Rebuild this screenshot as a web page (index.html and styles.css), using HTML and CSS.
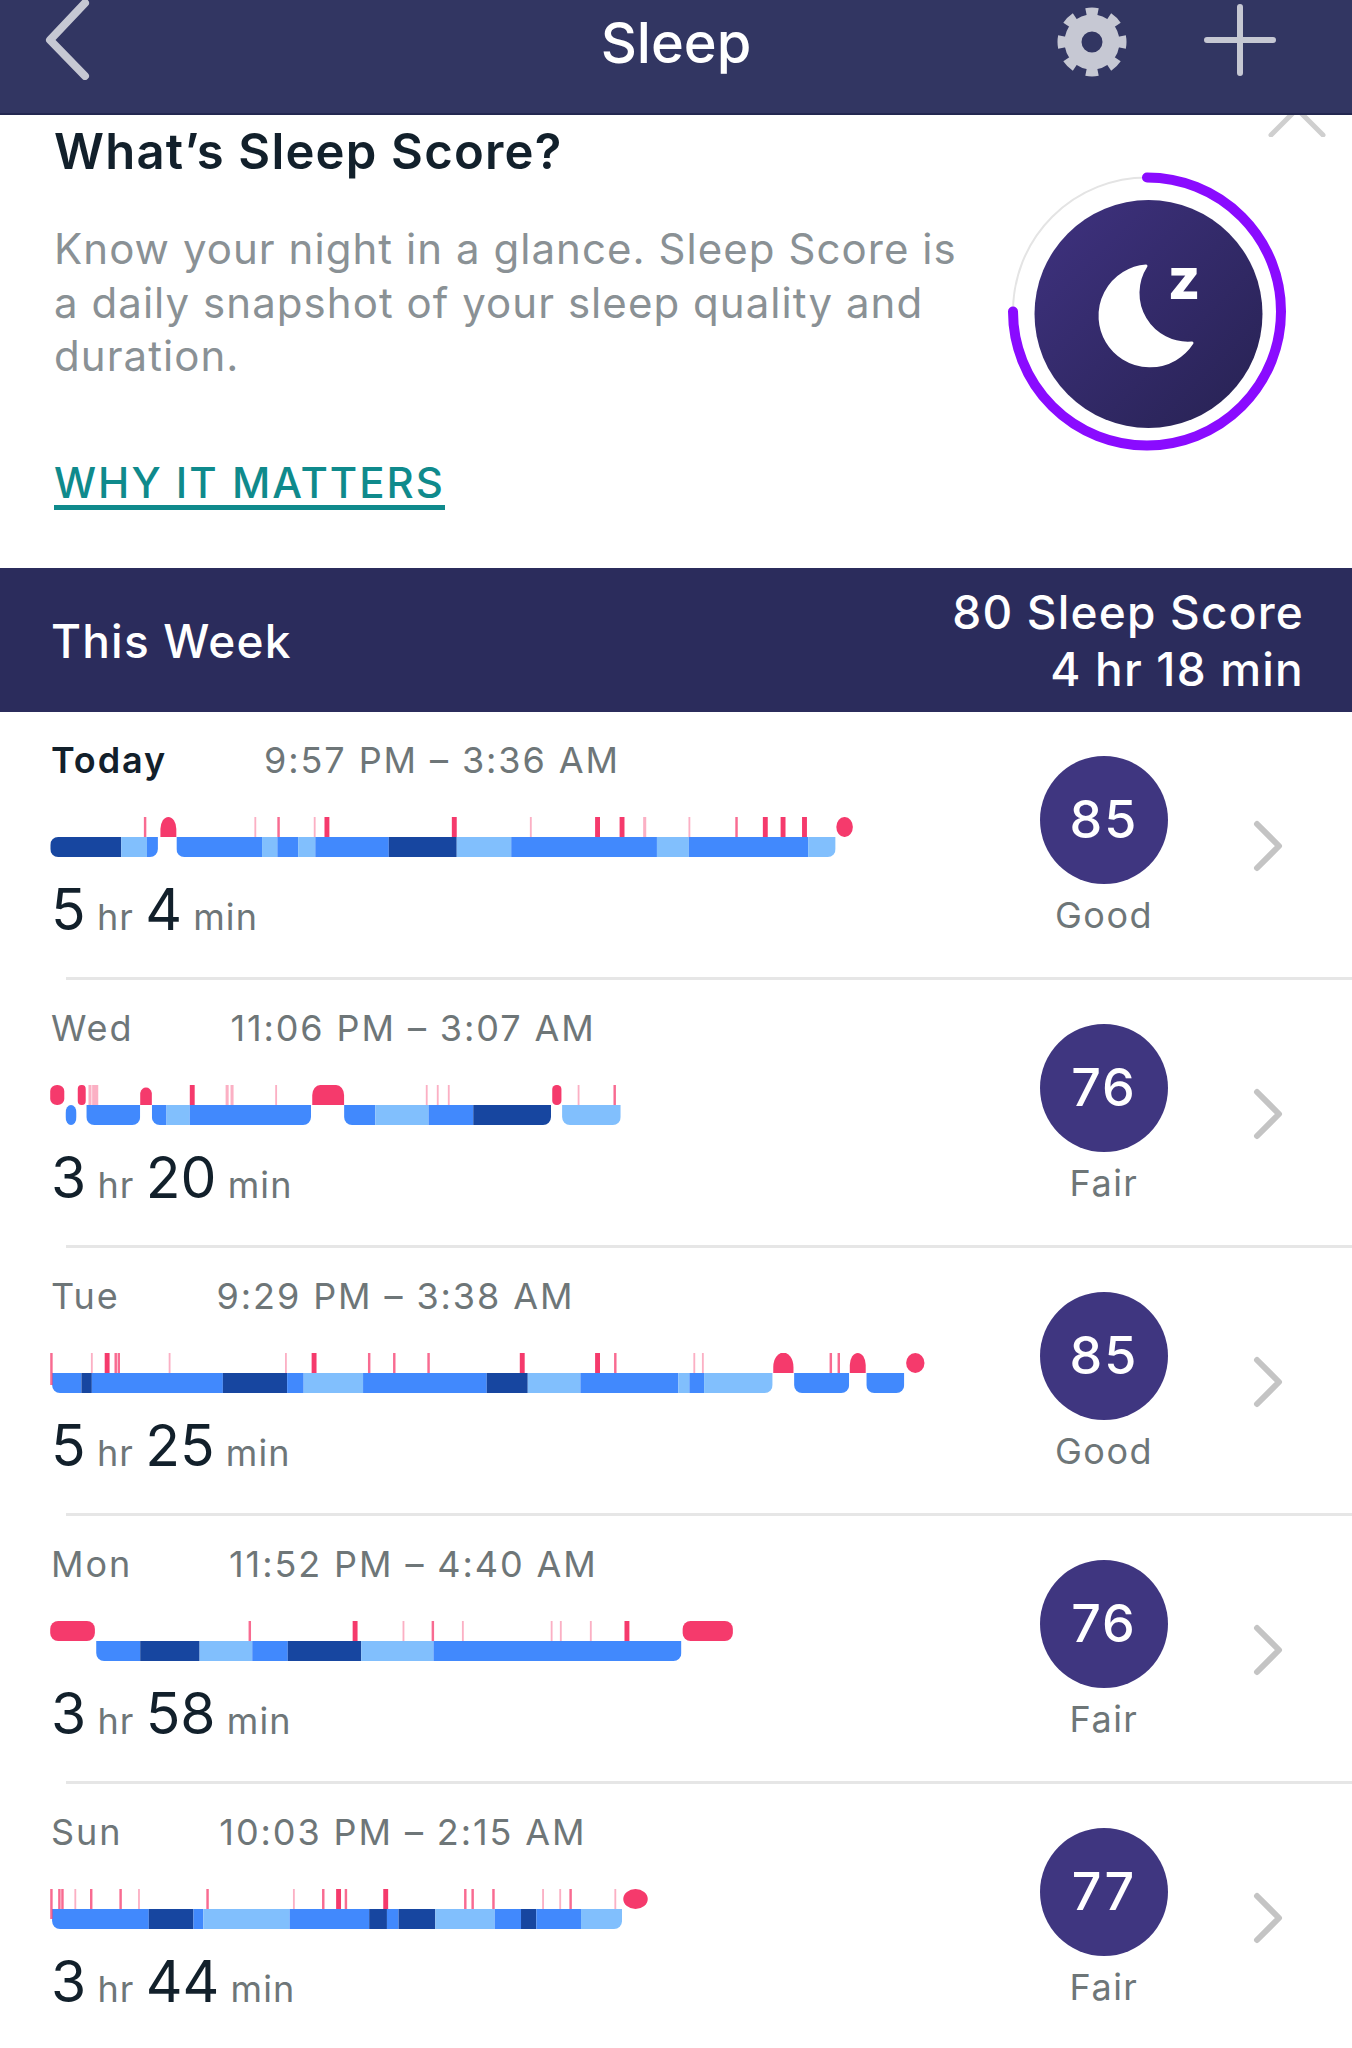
FILE: index.html
```html
<!DOCTYPE html>
<html lang="en">
<head>
    <meta charset="UTF-8">
    <title>Sleep</title>
    <link rel="stylesheet" href="styles.css">
</head>
<body>
    <header class="topbar">
        <svg class="back" width="60" height="80" viewBox="0 0 60 80"><path d="M43 3 L8 40 L43 76"/></svg>
        <h1 class="title">Sleep</h1>
        <div class="actions">
            <svg class="gear" width="80" height="80" viewBox="0 0 80 80">
                <circle class="gear-ring" cx="40" cy="40" r="19"/>
                <circle class="gear-teeth" cx="40" cy="40" r="30" pathLength="8"/>
            </svg>
            <svg class="plus" width="72" height="72" viewBox="0 0 72 72"><path d="M36 3 V69 M3 36 H69"/></svg>
        </div>
    </header>

    <section class="intro">
        <svg class="collapse" width="60" height="30" viewBox="0 0 60 30"><path d="M4 28 L30 2 L56 28"/></svg>
        <div class="intro-text">
            <h2>What’s Sleep Score?</h2>
            <p>Know your night in a glance. Sleep Score is a daily snapshot of your sleep quality and duration.</p>
            <a href="#">WHY IT MATTERS</a>
        </div>
        <svg class="badge-art" width="290" height="290" viewBox="0 0 290 290">
            <defs>
                <linearGradient id="disc" x1="0" y1="0" x2="1" y2="1">
                    <stop offset="0" stop-color="#3f3280"/>
                    <stop offset="1" stop-color="#272252"/>
                </linearGradient>
            </defs>
            <circle class="ring-bg" cx="144" cy="143.5" r="134"/>
            <circle class="ring-on" cx="144" cy="143.5" r="134" pathLength="100" transform="rotate(-90 144 143.5)"/>
            <circle cx="145.500" cy="146" r="114" fill="url(#disc)"/>
            <path class="moon" d="M143 98 A50 50 0 1 0 189 175 A50 50 0 0 1 143 98 Z"/>
            <text class="zed" x="181" y="131">z</text>
        </svg>
    </section>

    <div class="week">
        <span class="week-name">This Week</span>
        <div class="week-sum">80 Sleep Score<br>4 hr 18 min</div>
    </div>

    <article class="night">
        <div class="night-main">
            <div class="when"><b>Today</b><span>9:57 PM – 3:36 AM</span></div>
            <svg class="chart" width="960" height="40" viewBox="0 0 1568 40" preserveAspectRatio="none">
                <clipPath id="t1"><rect x="82" y="20" width="176" height="20" rx="13" ry="8"/><rect x="170" y="10" width="88" height="30" rx="13" ry="8"/></clipPath>
                <clipPath id="t2"><rect x="288" y="10" width="1077" height="30" rx="13" ry="8"/><rect x="1300" y="20" width="65" height="20" rx="13" ry="8"/></clipPath>
                <g clip-path="url(#t1)">
                    <rect class="deep" x="82" y="20" width="116" height="20"/>
                    <rect class="rem" x="198" y="20" width="42" height="20"/>
                    <rect class="light" x="240" y="20" width="18" height="20"/>
                </g>
                <g clip-path="url(#t2)">
                    <rect class="light" x="288" y="20" width="140" height="20"/>
                    <rect class="rem" x="428" y="20" width="25" height="20"/>
                    <rect class="light" x="453" y="20" width="34" height="20"/>
                    <rect class="rem" x="487" y="20" width="28" height="20"/>
                    <rect class="light" x="515" y="20" width="120" height="20"/>
                    <rect class="deep" x="635" y="20" width="111" height="20"/>
                    <rect class="rem" x="746" y="20" width="89" height="20"/>
                    <rect class="light" x="835" y="20" width="238" height="20"/>
                    <rect class="rem" x="1073" y="20" width="52" height="20"/>
                    <rect class="light" x="1125" y="20" width="195" height="20"/>
                    <rect class="rem" x="1320" y="20" width="45" height="20"/>
                </g>
                <path class="wake" d="M262 20 V12 A13 12 0 0 1 288 12 V20 Z"/>
                <rect class="wake" x="1366" y="0" width="27" height="20" rx="13" ry="10"/>
                <path class="tick-m" d="M237 0V20M455 0V20M1203 0V20"/>
                <path class="tick-p" d="M417 0V20M514 0V20M867 0V20M1126 0V20"/>
                <path class="tick-p wide" d="M1053 0V20"/>
                <path class="tick-s" d="M534 0V20M742 0V20M976 0V20M1016 0V20M1250 0V20M1279 0V20M1314 0V20"/>
            </svg>
            <div class="length"><b>5</b> hr <b>4</b> min</div>
        </div>
        <div class="score"><div class="dot">85</div><span>Good</span></div>
        <svg class="more" width="32" height="52" viewBox="0 0 32 52"><path d="M4 4 L26 26 L4 48"/></svg>
    </article>

    <article class="night">
        <div class="night-main">
            <div class="when"><span>Wed</span><span>11:06 PM – 3:07 AM</span></div>
            <svg class="chart" width="960" height="40" viewBox="0 0 1568 40" preserveAspectRatio="none">
                <clipPath id="w1"><rect x="107" y="20" width="18" height="20" rx="9" ry="8"/></clipPath>
                <clipPath id="w2"><rect x="141" y="10" width="88" height="30" rx="13" ry="8"/></clipPath>
                <clipPath id="w3"><rect x="248" y="10" width="260" height="30" rx="13" ry="8"/></clipPath>
                <clipPath id="w4"><rect x="562" y="10" width="338" height="30" rx="13" ry="8"/></clipPath>
                <clipPath id="w5"><rect x="918" y="10" width="96" height="30" rx="13" ry="8"/><rect x="950" y="20" width="64" height="20" rx="13" ry="8"/></clipPath>
                <rect class="light" x="107" y="20" width="18" height="20" clip-path="url(#w1)"/>
                <rect class="light" x="141" y="20" width="88" height="20" clip-path="url(#w2)"/>
                <g clip-path="url(#w3)">
                    <rect class="light" x="248" y="20" width="24" height="20"/>
                    <rect class="rem" x="272" y="20" width="38" height="20"/>
                    <rect class="light" x="310" y="20" width="198" height="20"/>
                </g>
                <g clip-path="url(#w4)">
                    <rect class="light" x="562" y="20" width="51" height="20"/>
                    <rect class="rem" x="613" y="20" width="87" height="20"/>
                    <rect class="light" x="700" y="20" width="73" height="20"/>
                    <rect class="deep" x="773" y="20" width="127" height="20"/>
                </g>
                <rect class="rem" x="918" y="20" width="96" height="20" clip-path="url(#w5)"/>
                <rect class="wake" x="82" y="0" width="23" height="20" rx="11" ry="6"/>
                <rect class="wake" x="127" y="0" width="13" height="20" rx="6" ry="4"/>
                <path class="wake" d="M229 20 V8 A10 8 0 0 1 248 8 V20 Z"/>
                <path class="wake" d="M510 20 V10 A13 10 0 0 1 523 0 H549 A13 10 0 0 1 562 10 V20 Z"/>
                <rect class="wake" x="902" y="0" width="15" height="20" rx="7" ry="4"/>
                <path class="tick-p wide" d="M147 0V20M153 0V20M158 0V20M371 0V20M379 0V20"/>
                <path class="tick-s" d="M314 0V20"/>
                <path class="tick-p" d="M451 0V20M697 0V20M715 0V20M733 0V20M945 0V20"/>
                <path class="tick-m" d="M1004 0V20"/>
            </svg>
            <div class="length"><b>3</b> hr <b>20</b> min</div>
        </div>
        <div class="score"><div class="dot">76</div><span>Fair</span></div>
        <svg class="more" width="32" height="52" viewBox="0 0 32 52"><path d="M4 4 L26 26 L4 48"/></svg>
    </article>

    <article class="night">
        <div class="night-main">
            <div class="when"><span>Tue</span><span>9:29 PM – 3:38 AM</span></div>
            <svg class="chart" width="960" height="40" viewBox="0 0 1568 40" preserveAspectRatio="none">
                <clipPath id="u1"><rect x="85" y="10" width="1177" height="30" rx="13" ry="8"/></clipPath>
                <clipPath id="u2"><rect x="1297" y="10" width="90" height="30" rx="13" ry="8"/></clipPath>
                <clipPath id="u3"><rect x="1415" y="10" width="62" height="30" rx="13" ry="8"/></clipPath>
                <g clip-path="url(#u1)">
                    <rect class="light" x="85" y="20" width="48" height="20"/>
                    <rect class="deep" x="133" y="20" width="17" height="20"/>
                    <rect class="light" x="150" y="20" width="214" height="20"/>
                    <rect class="deep" x="364" y="20" width="105" height="20"/>
                    <rect class="light" x="469" y="20" width="27" height="20"/>
                    <rect class="rem" x="496" y="20" width="97" height="20"/>
                    <rect class="light" x="593" y="20" width="202" height="20"/>
                    <rect class="deep" x="795" y="20" width="67" height="20"/>
                    <rect class="rem" x="862" y="20" width="86" height="20"/>
                    <rect class="light" x="948" y="20" width="160" height="20"/>
                    <rect class="rem" x="1108" y="20" width="18" height="20"/>
                    <rect class="light" x="1126" y="20" width="24" height="20"/>
                    <rect class="rem" x="1150" y="20" width="112" height="20"/>
                </g>
                <rect class="light" x="1297" y="20" width="90" height="20" clip-path="url(#u2)"/>
                <rect class="light" x="1415" y="20" width="62" height="20" clip-path="url(#u3)"/>
                <path class="wake" d="M1263 20 V14 A16 14 0 0 1 1296 14 V20 Z"/>
                <path class="wake" d="M1388 20 V12 A13 12 0 0 1 1414 12 V20 Z"/>
                <rect class="wake" x="1480" y="0" width="30" height="20" rx="15" ry="10"/>
                <path class="tick-s" d="M175 0V20M513 0V20M853 0V20M976 0V20"/>
                <path class="tick-m" d="M84 0V32M189 0V20M194 0V20M603 0V20M644 0V20M700 0V20M1005 0V20M1357 0V20M1370 0V20"/>
                <path class="tick-p" d="M150 0V20M277 0V20M467 0V20M1134 0V20M1148 0V20"/>
            </svg>
            <div class="length"><b>5</b> hr <b>25</b> min</div>
        </div>
        <div class="score"><div class="dot">85</div><span>Good</span></div>
        <svg class="more" width="32" height="52" viewBox="0 0 32 52"><path d="M4 4 L26 26 L4 48"/></svg>
    </article>

    <article class="night">
        <div class="night-main">
            <div class="when"><span>Mon</span><span>11:52 PM – 4:40 AM</span></div>
            <svg class="chart" width="960" height="40" viewBox="0 0 1568 40" preserveAspectRatio="none">
                <clipPath id="m1"><rect x="157" y="10" width="956" height="30" rx="13" ry="8"/></clipPath>
                <g clip-path="url(#m1)">
                    <rect class="light" x="157" y="20" width="72" height="20"/>
                    <rect class="deep" x="229" y="20" width="97" height="20"/>
                    <rect class="rem" x="326" y="20" width="86" height="20"/>
                    <rect class="light" x="412" y="20" width="58" height="20"/>
                    <rect class="deep" x="470" y="20" width="120" height="20"/>
                    <rect class="rem" x="590" y="20" width="118" height="20"/>
                    <rect class="light" x="708" y="20" width="405" height="20"/>
                </g>
                <rect class="wake" x="82" y="0" width="73" height="20" rx="13" ry="8"/>
                <rect class="wake" x="1115" y="0" width="82" height="20" rx="13" ry="8"/>
                <path class="tick-m" d="M408 0V20M707 0V20"/>
                <path class="tick-s" d="M580 0V20M1024 0V20"/>
                <path class="tick-p" d="M659 0V20M756 0V20M901 0V20M916 0V20M965 0V20"/>
            </svg>
            <div class="length"><b>3</b> hr <b>58</b> min</div>
        </div>
        <div class="score"><div class="dot">76</div><span>Fair</span></div>
        <svg class="more" width="32" height="52" viewBox="0 0 32 52"><path d="M4 4 L26 26 L4 48"/></svg>
    </article>

    <article class="night">
        <div class="night-main">
            <div class="when"><span>Sun</span><span>10:03 PM – 2:15 AM</span></div>
            <svg class="chart" width="960" height="40" viewBox="0 0 1568 40" preserveAspectRatio="none">
                <clipPath id="s1"><rect x="85" y="10" width="931" height="30" rx="13" ry="8"/></clipPath>
                <g clip-path="url(#s1)">
                    <rect class="light" x="85" y="20" width="158" height="20"/>
                    <rect class="deep" x="243" y="20" width="73" height="20"/>
                    <rect class="light" x="316" y="20" width="16" height="20"/>
                    <rect class="rem" x="332" y="20" width="141" height="20"/>
                    <rect class="light" x="473" y="20" width="130" height="20"/>
                    <rect class="deep" x="603" y="20" width="29" height="20"/>
                    <rect class="light" x="632" y="20" width="19" height="20"/>
                    <rect class="deep" x="651" y="20" width="60" height="20"/>
                    <rect class="rem" x="711" y="20" width="97" height="20"/>
                    <rect class="light" x="808" y="20" width="43" height="20"/>
                    <rect class="deep" x="851" y="20" width="25" height="20"/>
                    <rect class="light" x="876" y="20" width="73" height="20"/>
                    <rect class="rem" x="949" y="20" width="67" height="20"/>
                </g>
                <rect class="wake" x="1018" y="0" width="40" height="20" rx="20" ry="10"/>
                <path class="tick-s" d="M553 0V20M630 0V20"/>
                <path class="tick-m" d="M84 0V30M97 0V20M102 0V20M149 0V20M197 0V20M339 0V20M528 0V20M565 0V20M760 0V20M772 0V20M806 0V20M932 0V20"/>
                <path class="tick-p" d="M123 0V20M227 0V20M480 0V20M887 0V20M915 0V20M1005 0V20"/>
            </svg>
            <div class="length"><b>3</b> hr <b>44</b> min</div>
        </div>
        <div class="score"><div class="dot">77</div><span>Fair</span></div>
        <svg class="more" width="32" height="52" viewBox="0 0 32 52"><path d="M4 4 L26 26 L4 48"/></svg>
    </article>
</body>
</html>
```

FILE: styles.css
```css
html, body {
    margin: 0;
    height: 2048px;
    overflow: hidden;
    background-color: white;
}

body {
    font-family: Inter, "Liberation Sans", sans-serif;
    color: #12202b;
}

/* top bar */
.topbar {
    height: 115px;
    box-sizing: border-box;
    border-bottom: 2px solid #232750;
    background-color: #323662;
    display: grid;
    grid-template-columns: 1fr auto 1fr;
    align-items: start;
}

.back {
    margin-left: 42px;
}

.back path,
.plus path,
.collapse path,
.more path {
    fill: none;
    stroke-linecap: round;
    stroke-linejoin: round;
}

.back path {
    stroke: #c6c8d3;
    stroke-width: 8;
}

.title {
    margin: 0;
    line-height: 86px;
    font-size: 56px;
    font-weight: 500;
    color: white;
}

.actions {
    display: flex;
    justify-content: flex-end;
    align-items: flex-start;
    gap: 72px;
    padding-right: 76px;
}

.gear {
    margin-top: 2px;
}

.gear-ring {
    fill: none;
    stroke: #c6c8d3;
    stroke-width: 17;
}

.gear-teeth {
    fill: none;
    stroke: #c6c8d3;
    stroke-width: 9;
    stroke-dasharray: 0.5 0.5;
    stroke-dashoffset: 0.25;
}

.plus {
    margin-top: 4px;
}

.plus path {
    stroke: #c6c8d3;
    stroke-width: 6;
}

/* what's sleep score */
.intro {
    height: 453px;
    position: relative;
    overflow: hidden;
    display: flex;
    justify-content: space-between;
    align-items: flex-start;
}

.collapse {
    position: absolute;
    top: -8px;
    left: 1267px;
}

.collapse path {
    stroke: #cfcfcf;
    stroke-width: 5;
}

.intro-text {
    width: 930px;
    padding-left: 54px;
}

.intro-text h2 {
    margin: 9px 0 0;
    font-size: 49px;
    line-height: 56px;
    font-weight: 600;
    letter-spacing: 1.2px;
}

.intro-text p {
    margin: 42px 0 0;
    font-size: 42px;
    line-height: 53.5px;
    letter-spacing: 1.05px;
    color: #8a9195;
}

.intro-text a {
    display: inline-block;
    margin-top: 78px;
    font-size: 42px;
    line-height: 44px;
    font-weight: 500;
    letter-spacing: 2px;
    color: #0f8a8c;
    text-decoration: none;
    border-bottom: 5px solid #0f8a8c;
}

.badge-art {
    margin: 53px 59px 0 0;
}

.ring-bg {
    fill: none;
    stroke: #e4e4e4;
    stroke-width: 2;
}

.ring-on {
    fill: none;
    stroke: #8a0bff;
    stroke-width: 10;
    stroke-linecap: round;
    stroke-dasharray: 75 25;
}

.moon {
    fill: white;
    stroke: white;
    stroke-width: 3;
    stroke-linejoin: round;
}

.zed {
    fill: white;
    font-size: 56px;
    font-weight: 800;
    text-anchor: middle;
}

/* week band */
.week {
    height: 144px;
    box-sizing: border-box;
    padding: 18px 48px 0 51px;
    background-color: #2b2c5c;
    color: white;
    display: flex;
    justify-content: space-between;
    align-items: center;
    font-size: 46px;
    font-weight: 500;
    letter-spacing: 1.2px;
}

.week-sum {
    text-align: right;
    line-height: 57px;
    padding-bottom: 16px;
}

.week-name {
    padding-bottom: 16px;
}

/* nights */
.night {
    height: 268px;
    box-sizing: border-box;
    padding-left: 51px;
    display: flex;
    align-items: flex-start;
    background: linear-gradient(#e6e6e6, #e6e6e6) no-repeat 66px 100% / 100% 3px;
}

.night-main {
    width: 989px;
    padding-top: 28px;
}

.when {
    display: flex;
    gap: 97px;
    font-size: 36px;
    line-height: 40px;
    letter-spacing: 1.9px;
    color: #6e7678;
}

.when b {
    font-weight: 600;
    color: #12202b;
}

.chart {
    display: block;
    margin: 37px 0 0 -51px;
}

.chart .deep { fill: #1746a0; }
.chart .light { fill: #4189fd; }
.chart .rem { fill: #81bffd; }
.chart .wake { fill: #f53a6c; }

.tick-s,
.tick-m,
.tick-p {
    fill: none;
    stroke: #f53a6c;
}

.tick-s { stroke-width: 8; }
.tick-m { stroke-width: 4; stroke-opacity: 0.75; }
.tick-p { stroke-width: 3; stroke-opacity: 0.4; }
.tick-p.wide { stroke-width: 5; }

.length {
    margin-top: 23px;
    line-height: 60px;
    font-size: 36px;
    letter-spacing: 1.1px;
    color: #6e7678;
}

.length b {
    font-size: 57px;
    font-weight: 400;
    letter-spacing: 0;
    color: #12202b;
}

.score {
    width: 128px;
    padding-top: 44px;
    text-align: center;
    font-size: 36px;
    letter-spacing: 1.5px;
    color: #6e7678;
}

.dot {
    height: 128px;
    border-radius: 50%;
    background-color: #3f3680;
    color: white;
    font-size: 52px;
    font-weight: 500;
    letter-spacing: 2px;
    line-height: 128px;
}

.score span {
    display: block;
    margin-top: 9px;
}

.more {
    margin: 108px 0 0 85px;
}

.more path {
    stroke: #c4c4c4;
    stroke-width: 6;
}
```
